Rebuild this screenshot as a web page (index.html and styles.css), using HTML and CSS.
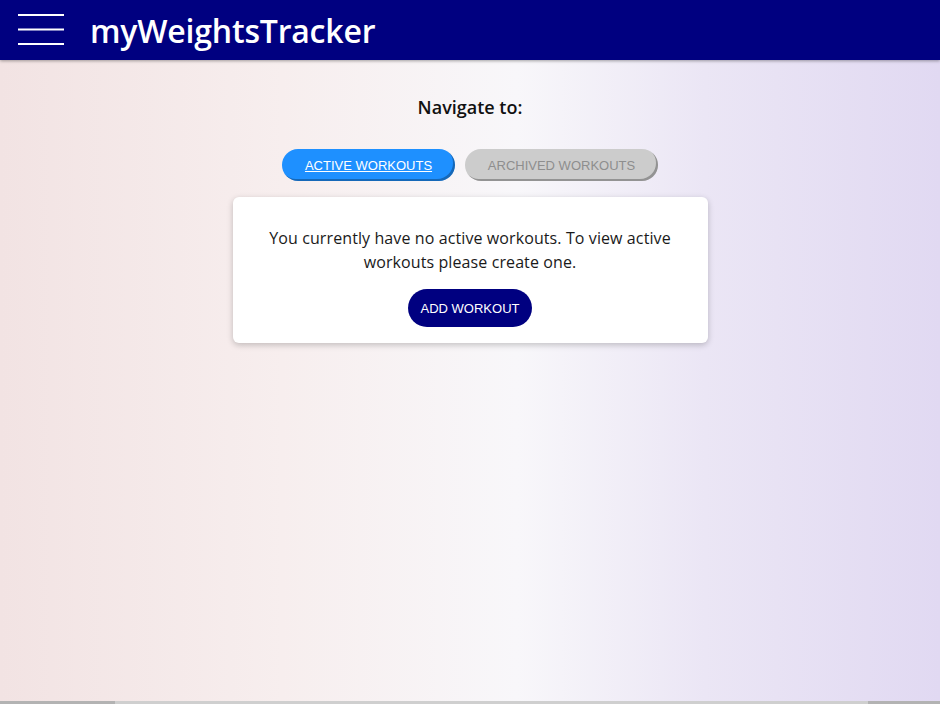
FILE: index.html
```html
<!DOCTYPE html>
<html lang="en">
<head>
<meta charset="utf-8">
<title>myWeightsTracker</title>
<link rel="stylesheet" href="styles.css">
</head>
<body>
<header class="topbar">
  <button class="menu-btn" aria-label="Menu">
    <svg width="48" height="34" viewBox="0 0 48 34">
      <rect x="0" y="0" width="46" height="2" fill="#fff"/>
      <rect x="0" y="14.5" width="46" height="2" fill="#fff"/>
      <rect x="0" y="29" width="46" height="2" fill="#fff"/>
    </svg>
  </button>
  <h1 class="brand">myWeightsTracker</h1>
</header>
<main class="content">
  <h2 class="nav-title">Navigate to:</h2>
  <div class="tabs">
    <a class="tab tab-active" href="#">ACTIVE WORKOUTS</a>
    <a class="tab tab-archived" href="#">ARCHIVED WORKOUTS</a>
  </div>
  <section class="card">
    <p class="card-text">You currently have no active workouts. To view active workouts please create one.</p>
    <button class="add-btn">ADD WORKOUT</button>
  </section>
</main>
<div class="hscroll"></div>
</body>
</html>
```
FILE: styles.css
```css
* { box-sizing: border-box; }
html, body { height: 100%; }
body {
  margin: 0;
  font-family: "Open Sans", "Noto Sans", Arial, sans-serif;
  background: linear-gradient(90deg, #f2e3e3 0%, #f7eeee 30%, #f8f7fa 55%, #ebe6f5 75%, #e1d9f2 100%);
  display: flex;
  flex-direction: column;
  overflow: hidden;
}
.topbar {
  height: 60px;
  background: #000080;
  display: flex;
  align-items: center;
  padding-left: 18px;
  box-shadow: 0 1px 3px rgba(0,0,0,0.35);
  flex-shrink: 0;
}
.menu-btn {
  background: none;
  border: 0;
  padding: 0;
  margin-top: 1px;
  width: 48px;
  height: 34px;
  display: flex;
}
.brand {
  margin: 0 0 0 24px;
  color: #fff;
  font-family: "Open Sans", "Noto Sans", sans-serif;
  font-weight: 600;
  font-size: 32px;
  letter-spacing: -0.2px;
  line-height: 1;
  padding-top: 2px;
}
.content {
  flex: 1;
  display: flex;
  flex-direction: column;
  align-items: center;
}
.nav-title {
  margin: 35px 0 0;
  font-size: 18px;
  font-weight: 600;
  color: #111;
  line-height: 24px;
}
.tabs {
  display: flex;
  gap: 10px;
  margin-top: 30px;
}
.tab {
  height: 32px;
  border-radius: 16px;
  display: flex;
  align-items: center;
  justify-content: center;
  font-family: "Liberation Sans", Arial, sans-serif;
  font-size: 13px;
  box-shadow: inset -2px -2px 0 rgba(0,0,0,0.28);
}
.tab-active {
  width: 173px;
  background: #1e90ff;
  color: #fff;
  text-decoration: underline;
}
.tab-archived {
  width: 193px;
  background: #cccccc;
  color: #8e8e8e;
  text-decoration: none;
}
.card {
  margin-top: 16px;
  width: 475px;
  background: #fff;
  border-radius: 6px;
  box-shadow: 0 2px 6px rgba(0,0,0,0.22);
  display: flex;
  flex-direction: column;
  align-items: center;
  padding: 30px 30px 16px;
}
.card-text {
  margin: 0;
  text-align: center;
  font-size: 16px;
  line-height: 23.5px;
  letter-spacing: 0.1px;
  color: #1a1a1a;
}
.add-btn {
  margin-top: 15px;
  width: 124px;
  height: 38px;
  border: 0;
  border-radius: 19px;
  background: #000080;
  color: #fff;
  font-family: "Liberation Sans", Arial, sans-serif;
  font-size: 13px;
}
.hscroll {
  height: 3px;
  background: #cfcfcf;
  flex-shrink: 0;
  display: flex;
  justify-content: space-between;
}
.hscroll::before, .hscroll::after {
  content: "";
  background: #b3b3b3;
}
.hscroll::before { width: 115px; }
.hscroll::after { width: 72px; }
```
